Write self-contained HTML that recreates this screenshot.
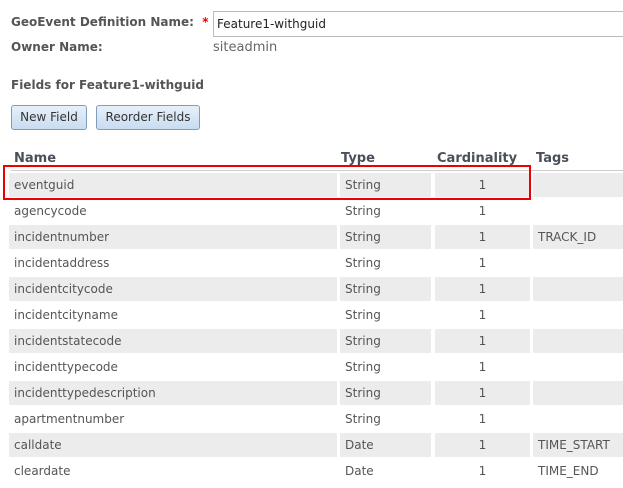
<!DOCTYPE html>
<html><head><style>
body{margin:0;width:623px;height:488px;background:#fff;font-family:"DejaVu Sans",Verdana,sans-serif;color:#555;position:relative;overflow:hidden}
.a{position:absolute;white-space:nowrap}
.lbl{font-weight:bold;font-size:12px;color:#555}
.btn{position:absolute;top:105px;height:23px;border:1px solid #7f9db9;border-radius:3px;background:linear-gradient(#e6f0fa,#c9dcf0);font-size:12px;color:#333;line-height:23px;text-align:center}
.c{position:absolute;height:24px;line-height:25px;font-size:12px;color:#555;box-sizing:border-box;padding-left:5px}
.g{background:#ececec}
.hd{position:absolute;top:151px;font-weight:bold;font-size:13px;color:#4a4f5a}
</style></head><body>
<div class="a lbl" style="left:11px;top:15px">GeoEvent Definition Name: &nbsp;<span style="color:#e00">*</span></div>
<div class="a" style="left:213px;top:11px;width:420px;height:26px;border:1px solid #bbb;box-sizing:border-box;font-size:12px;color:#222;line-height:24px;padding-left:3px">Feature1-withguid</div>
<div class="a lbl" style="left:11px;top:40px">Owner Name:</div>
<div class="a" style="left:213px;top:40px;font-size:13px;color:#666">siteadmin</div>
<div class="a lbl" style="left:11px;top:78px">Fields for Feature1-withguid</div>
<div class="btn" style="left:11px;width:74px">New Field</div>
<div class="btn" style="left:96px;width:102px">Reorder Fields</div>
<div class="hd" style="left:14px">Name</div>
<div class="hd" style="left:341px">Type</div>
<div class="hd" style="left:437px">Cardinality</div>
<div class="hd" style="left:536px">Tags</div>
<div class="a" style="left:11px;top:170px;width:612px;height:1px;background:#ccc"></div>
<div id="t"></div>
<div class="a" style="left:3px;top:165px;width:524px;height:31px;border:2px solid #e00"></div>
<script>
var r=[["eventguid","String",""],["agencycode","String",""],["incidentnumber","String","TRACK_ID"],["incidentaddress","String",""],["incidentcitycode","String",""],["incidentcityname","String",""],["incidentstatecode","String",""],["incidenttypecode","String",""],["incidenttypedescription","String",""],["apartmentnumber","String",""],["calldate","Date","TIME_START"],["cleardate","Date","TIME_END"]];
var h="";r.forEach(function(x,i){var y=173+i*26,g=i%2==0?" g":"";
h+='<div class="c'+g+'" style="left:9px;top:'+y+'px;width:328px">'+x[0]+'</div>';
h+='<div class="c'+g+'" style="left:340px;top:'+y+'px;width:91px">'+x[1]+'</div>';
h+='<div class="c'+g+'" style="left:435px;top:'+y+'px;width:95px;padding:0;text-align:center">1</div>';
h+='<div class="c'+g+'" style="left:533px;top:'+y+'px;width:90px">'+x[2]+'</div>';});
document.getElementById("t").innerHTML=h;
</script>
</body></html>
